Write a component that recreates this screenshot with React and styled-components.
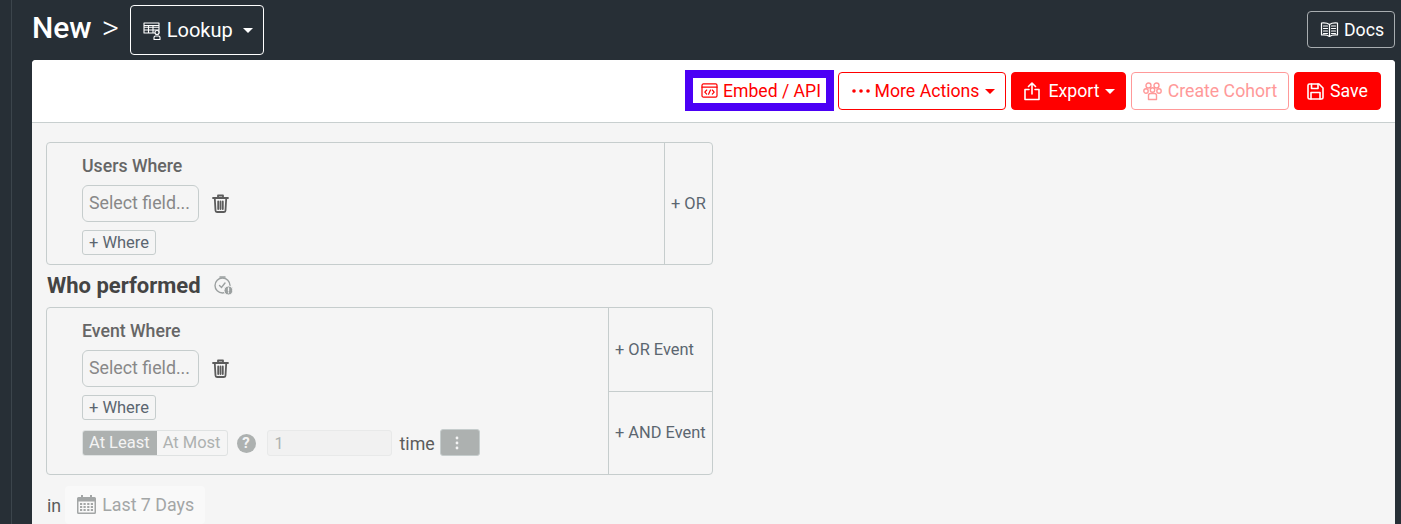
import React from "react";
import styled, { createGlobalStyle } from "styled-components";

const Global = createGlobalStyle`
  html, body { margin: 0; padding: 0; height: 524px; overflow: hidden; background: #272f36; }
  body { font-family: Roboto, "Liberation Sans", sans-serif; }
  * { box-sizing: border-box; }
`;
const Page = styled.div`display: flex; height: 524px; overflow: hidden; background: #272f36;`;
const Rail = styled.div`width: 12px; flex: none; border-right: 1px solid #3c454c;`;
const Main = styled.div`flex: 1; min-width: 0; padding: 0 6px 0 20px;`;
const Top = styled.div`height: 60px; display: flex; align-items: center;`;
const Title = styled.h1`margin: 0 0 4px 0; font-size: 30px; line-height: 36px; font-weight: 500; color: #fff;`;
const Sep = styled.span`margin: 0 11px 4px 10px; font-size: 33px; line-height: 36px; font-weight: 300; color: #fff;`;
const Picker = styled.button`
  display: flex; align-items: center; width: 134px; height: 50px; padding: 0 10px 0 12px;
  background: transparent; border: 1px solid #fff; border-radius: 4px; color: #fff;
  font: 400 20px/24px Roboto, sans-serif;
  svg { margin-right: 5px; flex: none; }
`;
const Caret = styled.span`
  display: inline-block; flex: none; margin-left: ${p => p.$gap || 0}px; border-top: 5px solid currentColor;
  border-left: 5px solid transparent; border-right: 5px solid transparent;
`;
const Docs = styled.button`
  margin-left: auto; margin-top: -1px; display: flex; align-items: center; gap: 5px; width: 88px; height: 37px; padding: 0 0 0 12px;
  background: transparent; border: 1px solid #a8adb0; border-radius: 4px; color: #fff;
  font: 400 17.7px/24px Roboto, sans-serif;
`;
const Card = styled.div`height: 464px; border-radius: 4px 4px 0 0; background: #f5f5f5; overflow: hidden;`;
const Toolbar = styled.div`
  height: 63px; background: #fff; border-bottom: 1px solid #c8cfcf; display: flex; align-items: center;
  justify-content: flex-end; gap: 5px; padding: 0 14px 0 0;
`;
const EmbedFrame = styled.div`border: 8px solid #4b00f5; background: #fff; margin: 0 -1px 1px 0;`;
const Embed = styled.button`
  display: flex; align-items: center; gap: 5px; height: 25px; width: 133px; justify-content: center; padding: 0 0 0 3px;
  background: #fff; border: 0; color: #f00; font: 400 17.6px/24px Roboto, sans-serif; white-space: nowrap;
`;
const Action = styled.button`
  display: flex; align-items: center; justify-content: center; height: 38px; width: ${p => p.$w}px; padding: 0 0 0 ${p => p.$pl || 0}px;
  gap: ${p => p.$gap || 6}px; border-radius: 4px; border: 1px solid ${p => p.$muted ? "#ff9999" : "#f00"};
  background: ${p => p.$solid ? "#f00" : "#fff"};
  color: ${p => p.$solid ? "#fff" : p.$muted ? "#ff9999" : "#f00"};
  font: 400 17.7px/24px Roboto, sans-serif; white-space: nowrap;
`;
const Body = styled.div`padding: 19px 0 0 14px;`;
const Box = styled.div`
  width: 667px; height: ${p => p.$h}px; display: flex; border: 1px solid #c6cdcd; border-radius: 4px;
`;
const BoxMain = styled.div`flex: 1; min-width: 0; padding: 12px 0 0 35px;`;
const Side = styled.div`width: ${p => p.$w}px; flex: none; border-left: 1px solid #c6cdcd; display: flex; flex-direction: column;`;
const SideBtn = styled.div`
  flex: 1; display: flex; align-items: center; padding-left: 6px; color: #5b6670; font-size: 16.400px; white-space: nowrap;
  & + & { border-top: 1px solid #c6cdcd; }
`;
const Label = styled.div`font-size: 17.700px; line-height: 22px; font-weight: 500; color: #666;`;
const FieldRow = styled.div`display: flex; align-items: center; gap: 13px; margin-top: 8px;`;
const Field = styled.div`
  width: 117px; height: 37px; border: 1px solid #c6cdcd; border-radius: 6px; display: flex; align-items: center;
  padding: 0 0 2px 6px; color: #888; font-size: 17.800px; white-space: nowrap;
`;
const Where = styled.div`
  width: 74px; height: 25px; margin-top: 8px; border: 1px solid #c6cdcd; border-radius: 3px; display: flex; align-items: center;
  justify-content: center; padding-bottom: 1px; color: #5b6670; font-size: 16.500px;
`;
const Heading = styled.div`
  height: 42px; display: flex; align-items: center; gap: 13px; margin-left: 1px; font-size: 22px; font-weight: 700; color: #444;
`;
const HeadText = styled.span`margin-bottom: 2px;`;
const Freq = styled.div`display: flex; align-items: center; margin-top: 9px; height: 28px;`;
const Segment = styled.div`display: flex; height: 26px; border: 1px solid #dfe2e2; border-radius: 3px; overflow: hidden; font-size: 16.500px;`;
const SegItem = styled.div`
  display: flex; align-items: center; padding: 0 ${p => p.$on ? 7 : 6}px 1px 6px; white-space: nowrap;
  background: ${p => p.$on ? "#adb1b0" : "transparent"}; color: ${p => p.$on ? "#f4f4f4" : "#adb1b0"};
`;
const Help = styled.div`
  width: 19px; height: 19px; margin: 0 11px 0 9px; border-radius: 50%; background: #adb1b0; color: #f4f4f4; font-size: 15px;
  font-weight: 700; display: flex; align-items: center; justify-content: center;
`;
const Count = styled.div`
  width: 125px; height: 26px; background: #f1f1f1; border: 1px solid #e8e9e9; border-radius: 3px; display: flex; align-items: center;
  padding-left: 7px; color: #adb1b0; font-size: 16px;
`;
const Time = styled.div`margin: 0 5px 0 8px; color: #5c5c5c; font-size: 17.800px;`;
const Kebab = styled.div`
  width: 40px; height: 27px; margin-bottom: 1px; padding-right: 6px; border-radius: 3px; background: #adb1b0; border: 1px solid #c6cdcd; display: flex; align-items: center; justify-content: center;
`;
const InRow = styled.div`display: flex; align-items: center; margin: 11px 0 0 1px; color: #5c5c5c; font-size: 17.800px; gap: 4px;`;
const Range = styled.div`
  width: 140px; height: 38px; background: #f9f9f9; border-radius: 4px; display: flex; align-items: center; justify-content: center; gap: 6px;
  padding: 0 0 1px 1px; color: #a3a6a6; font-size: 17.800px;
`;

const sv = { fill: "none", stroke: "currentColor", strokeLinecap: "round", strokeLinejoin: "round" };

const LookupIcon = () => (
  <svg width="19" height="19" viewBox="0 0 19 19" {...sv} strokeWidth="1.100">
    <path d="M1 2h15v10H9M1 2v10h8M1 2h15v2.500H1zM1 6.300h15M1 9h15M5.500 4.500V12M10 4.500V12" />
    <circle cx="14" cy="11.500" r="2" fill="#272f36" />
    <path d="M11 18.500v-2a1.500 1.500 0 0 1 1.500-1.500h3a1.500 1.500 0 0 1 1.500 1.500v2z" fill="#272f36" />
  </svg>
);
const BookIcon = () => (
  <svg width="19" height="17" viewBox="0 0 19 17" {...sv} strokeWidth="1.200">
    <path d="M9.500 3.500C7.500 2 4.500 1.700 1.500 2v12c3-.3 6 0 8 1.500 2-1.500 5-1.800 8-1.500V2c-3-.3-6 0-8 1.500zM9.500 3.500v12" />
    <path d="M3.500 5h4M3.500 7.500h4M3.500 10h4M3.500 12.500h4M11.500 5h4M11.500 7.500h4M11.500 10h4M11.500 12.500h4" />
  </svg>
);
const EmbedIcon = () => (
  <svg width="17" height="15" viewBox="0 0 18 16" {...sv} strokeWidth="1.300">
    <rect x="1" y="1" width="16" height="14" rx="1.500" />
    <path d="M1 4.500h16M6 7.500l-2 2.200 2 2.200M12 7.500l2 2.200-2 2.200M10 7.500l-2 4.400" />
  </svg>
);
const Dots = () => (
  <svg width="18" height="4" viewBox="0 0 18 4" fill="currentColor">
    <circle cx="2" cy="2" r="1.800" /><circle cx="9" cy="2" r="1.800" /><circle cx="16" cy="2" r="1.800" />
  </svg>
);
const ShareIcon = () => (
  <svg width="16" height="19" viewBox="0 0 16 19" {...sv} strokeWidth="1.600">
    <path d="M8 12V1.500M4.500 4.500 8 1l3.500 3.500M5 7.500H1v10h14v-10h-4" />
  </svg>
);
const CohortIcon = () => (
  <svg width="19" height="19" viewBox="0 0 19 19" {...sv} strokeWidth="1.400">
    <circle cx="5.500" cy="3.500" r="2.500" /><circle cx="13.500" cy="3.500" r="2.500" /><circle cx="3" cy="9" r="2.200" /><circle cx="16" cy="9" r="2.200" />
    <circle cx="9.500" cy="8" r="2.200" /><path d="M5.500 17.500v-4a2 2 0 0 1 2-2h4a2 2 0 0 1 2 2v4z" />
  </svg>
);
const SaveIcon = () => (
  <svg width="17" height="17" viewBox="0 0 17 17" {...sv} strokeWidth="1.600">
    <path d="M1 2.500A1.500 1.500 0 0 1 2.500 1H12l4 4v9.500a1.500 1.500 0 0 1-1.500 1.500h-12A1.500 1.500 0 0 1 1 14.500z" />
    <path d="M4.500 1v4.500h6.500V1M4 16v-6.500h9V16" />
  </svg>
);
const Trash = () => (
  <svg width="17" height="19" viewBox="0 0 17 19" fill="none" stroke="#5c5c5c" strokeWidth="1.800" strokeLinecap="round" strokeLinejoin="round">
    <path d="M1 4h15M6 3.500V1.500h5v2M2.800 4.500l.7 12a1.500 1.500 0 0 0 1.500 1.500h7a1.500 1.500 0 0 0 1.500-1.500l.7-12M6.200 7.500v7.500M8.500 7.500v7.500M10.800 7.500v7.500" />
  </svg>
);
const ClockIcon = () => (
  <svg width="20" height="20" viewBox="0 0 20 20" fill="none" stroke="#9ba0a0" strokeWidth="1.400" strokeLinecap="round">
    <circle cx="8.500" cy="9.500" r="7.500" />
    <path d="M5.500 9.500l2 2 3.500-4.500M6 1h5" />
    <circle cx="14.500" cy="14.500" r="4.500" fill="#9ba0a0" stroke="#f5f5f5" strokeWidth="1" />
    <path d="M14.500 12v3M14.500 16.700v.1" stroke="#f5f5f5" strokeWidth="1.300" />
  </svg>
);
const Calendar = () => (
  <svg width="19" height="19" viewBox="0 0 19 19" fill="#a3a6a6">
    <path d="M4 0h2v2h7V0h2v2h2.500A1.500 1.500 0 0 1 19 3.500v14a1.500 1.500 0 0 1-1.500 1.500h-16A1.500 1.500 0 0 1 0 17.500v-14A1.500 1.500 0 0 1 1.500 2H4z" />
    <path fill="#f9f9f9" d="M1.500 6.500h16v11h-16z" />
    <path d="M3 8h2.200v2H3zM6.500 8h2.200v2H6.500zM10.200 8h2.200v2h-2.200zM13.800 8H16v2h-2.200zM3 11h2.200v2H3zM6.500 11h2.200v2H6.500zM10.200 11h2.200v2h-2.200zM13.800 11H16v2h-2.200zM3 14h2.200v2H3zM6.500 14h2.200v2H6.500zM10.200 14h2.200v2h-2.200zM13.800 14H16v2h-2.200z" />
  </svg>
);
const KebabDots = () => (
  <svg width="4" height="14" viewBox="0 0 4 14" fill="#f4f4f4">
    <circle cx="2" cy="2" r="1.400" /><circle cx="2" cy="7" r="1.400" /><circle cx="2" cy="12" r="1.400" />
  </svg>
);

export default function App() {
  return (
    <>
      <Global />
      <Page>
        <Rail />
        <Main>
          <Top>
            <Title>New</Title>
            <Sep>&gt;</Sep>
            <Picker><LookupIcon />Lookup<Caret $gap={10} /></Picker>
            <Docs><BookIcon />Docs</Docs>
          </Top>
          <Card>
            <Toolbar>
              <EmbedFrame><Embed><EmbedIcon />Embed / API</Embed></EmbedFrame>
              <Action $w={168} $gap={5} $pl={2}><Dots />More Actions<Caret /></Action>
              <Action $w={115} $gap={8} $pl={2} $solid><ShareIcon />Export<Caret $gap={-3} /></Action>
              <Action $w={158} $muted><CohortIcon />Create Cohort</Action>
              <Action $w={87} $solid><SaveIcon />Save</Action>
            </Toolbar>
            <Body>
              <Box $h={123}>
                <BoxMain>
                  <Label>Users Where</Label>
                  <FieldRow><Field>Select field...</Field><Trash /></FieldRow>
                  <Where>+ Where</Where>
                </BoxMain>
                <Side $w={48}><SideBtn>+ OR</SideBtn></Side>
              </Box>
              <Heading><HeadText>Who performed</HeadText><ClockIcon /></Heading>
              <Box $h={168}>
                <BoxMain>
                  <Label>Event Where</Label>
                  <FieldRow><Field>Select field...</Field><Trash /></FieldRow>
                  <Where>+ Where</Where>
                  <Freq>
                    <Segment><SegItem $on>At Least</SegItem><SegItem>At Most</SegItem></Segment>
                    <Help>?</Help>
                    <Count>1</Count>
                    <Time>time</Time>
                    <Kebab><KebabDots /></Kebab>
                  </Freq>
                </BoxMain>
                <Side $w={104}><SideBtn>+ OR Event</SideBtn><SideBtn>+ AND Event</SideBtn></Side>
              </Box>
              <InRow>in <Range><Calendar />Last 7 Days</Range></InRow>
            </Body>
          </Card>
        </Main>
      </Page>
    </>
  );
}
